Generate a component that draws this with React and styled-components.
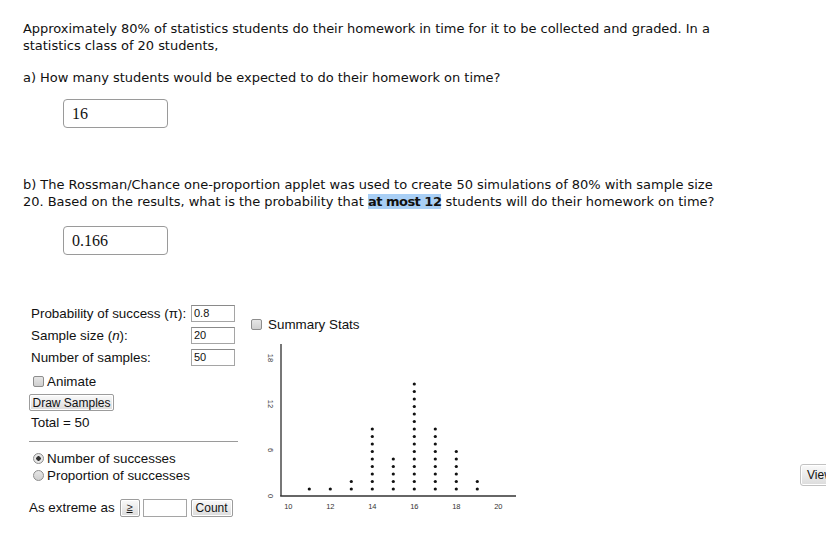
import React from 'react'
import styled, { createGlobalStyle } from 'styled-components'

const GlobalStyle = createGlobalStyle`
  html, body {
    margin: 0;
    padding: 0;
    background: #fff;
  }
  body {
    overflow: hidden;
  }
`

const Page = styled.div`
  width: 826px;
  height: 547px;
  overflow: hidden;
  padding-top: 20px;
  box-sizing: border-box;
`

const Question = styled.div`
  padding-left: 23px;
  font-family: 'DejaVu Sans', Verdana, sans-serif;
  font-size: 13px;
  letter-spacing: -0.03px;
  line-height: 17px;
  color: #111;
`

const Para = styled.p`
  margin: 0;
  margin-top: ${({ gap }) => gap || 0}px;
`

const Mark = styled.b`
  background: #a9cff5;
  letter-spacing: -0.5px;
`

const AnswerBox = styled.div`
  margin: ${({ top }) => top}px 0 0 40px;
  width: 105px;
  height: 29px;
  box-sizing: border-box;
  border: 1px solid #9a9a9a;
  border-radius: 4px;
  padding: 0 8px;
  display: flex;
  align-items: center;
  font-family: 'Liberation Serif', 'Times New Roman', serif;
  font-size: 16px;
  color: #111;
`

const Applet = styled.div`
  display: flex;
  align-items: flex-start;
  margin-top: 47px;
  padding-left: 29px;
  font-family: 'Liberation Sans', Arial, sans-serif;
  font-size: 13.4px;
  color: #111;
`

const LeftColumn = styled.div`
  width: 210px;
  flex-shrink: 0;
  display: flex;
  flex-direction: column;
  white-space: nowrap;
`

const ParamGrid = styled.div`
  display: grid;
  grid-template-columns: 160px 44px;
  grid-auto-rows: 22px;
  align-items: center;
  padding-left: 2px;
`

const SmallInput = styled.div`
  width: 44px;
  height: 17px;
  box-sizing: border-box;
  border: 1px solid #a5a5a5;
  border-top-color: #8a8a8a;
  font-size: 11px;
  line-height: 15px;
  padding-left: 2px;
  background: #fff;
`

const CheckRow = styled.label`
  display: flex;
  align-items: center;
  height: ${({ h }) => h || 18}px;
  padding-left: 4px;
  gap: 3px;
  margin-top: ${({ top }) => top || 0}px;
`

const Box = styled.span`
  width: 9px;
  height: 9px;
  border: 1px solid #8d8d8d;
  border-radius: 2px;
  background: linear-gradient(#e6e6e6, #cfcfcf);
`

const Radio = styled.span`
  width: 9px;
  height: 9px;
  border: 1px solid #8d8d8d;
  border-radius: 50%;
  background: ${({ on }) =>
    on ? 'radial-gradient(circle, #333 0 2px, #e6e6e6 2.5px)' : 'linear-gradient(#e6e6e6, #cfcfcf)'};
`

const GrayButton = styled.button`
  font-family: 'Liberation Sans', Arial, sans-serif;
  font-size: ${({ fs }) => fs || 12}px;
  color: #111;
  height: ${({ h }) => h || 17}px;
  padding: 0 5px;
  border: 1px solid #9c9c9c;
  border-radius: 2px;
  background: linear-gradient(#fafafa, #dcdcdc);
  box-shadow: inset 0 0 0 1px #fff;
  line-height: 1;
  cursor: default;
`

const DrawButton = styled(GrayButton)`
  align-self: flex-start;
  margin-top: 3px;
  width: 85px;
  padding: 0;
`

const TotalLine = styled.div`
  height: 22px;
  display: flex;
  align-items: center;
  padding-left: 2px;
`

const Rule = styled.hr`
  margin: 8px 0 8px 0;
  border: 0;
  border-top: 1px solid #9a9a9a;
  width: 209px;
`

const ExtremeRow = styled.div`
  display: flex;
  align-items: center;
  margin-top: 14px;
  height: 19px;
`

const ExtremeLabel = styled.span`
  margin-right: 5px;
`

const CountInput = styled.div`
  width: 44px;
  height: 18px;
  box-sizing: border-box;
  border: 1px solid #a5a5a5;
  margin: 0 4px 0 3px;
`

const GeButton = styled(GrayButton)`
  width: 20px;
  height: 18px;
  padding: 0;
  font-size: 11px;
  text-decoration: underline;
`

const CountButton = styled(GrayButton)`
  width: 42px;
  height: 18px;
  padding: 0;
`

const RightColumn = styled.div`
  margin-left: 12px;
  display: flex;
  flex-direction: column;
  padding-top: 12px;
`

const StatsRow = styled.label`
  display: flex;
  align-items: center;
  gap: 6px;
  height: 20px;
`

const Chart = styled.svg`
  display: block;
  margin: 1px 0 0 5px;
  overflow: visible;
`

const ViewButton = styled(GrayButton)`
  margin-top: 162px;
  margin-left: auto;
  margin-right: -14px;
  flex-shrink: 0;
  width: 40px;
  height: 22px;
  padding: 0 0 0 6px;
  text-align: left;
  border-radius: 3px;
  border-color: #c2c2c2;
`

const counts = { 11: 1, 12: 1, 13: 2, 14: 9, 15: 5, 16: 15, 17: 9, 18: 6, 19: 2 }

const xOf = (v) => 32.3 + 21 * (v - 10)

const DotPlot = () => {
  const dots = []
  Object.entries(counts).forEach(([v, n]) => {
    for (let i = 0; i < n; i++) {
      dots.push(<circle key={`${v}-${i}`} cx={xOf(+v)} cy={154 - 7.5 * i} r={1.6} fill='#111' />)
    }
  })
  const yTicks = [
    [0, 161],
    [6, 115],
    [12, 69],
    [18, 23],
  ]
  return (
    <Chart width='265' height='180' viewBox='0 0 265 180'>
      <line x1='25' y1='9' x2='25' y2='161' stroke='#555' strokeWidth='1.6' />
      <line x1='24.2' y1='161' x2='260' y2='161' stroke='#333' strokeWidth='1.6' />
      {dots}
      {[10, 12, 14, 16, 18, 20].map((t) => (
        <text
          key={t}
          x={xOf(t)}
          y='174'
          fontSize='7.5'
          textAnchor='middle'
          fill='#333'
          fontFamily='Liberation Sans, Arial, sans-serif'
        >
          {t}
        </text>
      ))}
      {yTicks.map(([t, y]) => (
        <text
          key={t}
          x='0'
          y='0'
          fontSize='7.5'
          textAnchor='middle'
          fill='#333'
          fontFamily='Liberation Sans, Arial, sans-serif'
          transform={`translate(11.5 ${y}) rotate(90)`}
        >
          {t}
        </text>
      ))}
    </Chart>
  )
}

const App = () => (
  <Page>
    <GlobalStyle />
    <Question>
      <Para>
        Approximately 80% of statistics students do their homework in time for it to be collected and graded. In a
        <br />
        statistics class of 20 students,
      </Para>
      <Para gap={15}>a) How many students would be expected to do their homework on time?</Para>
    </Question>
    <Question>
      <AnswerBox top={13}>16</AnswerBox>
      <Para gap={48}>
        b) The Rossman/Chance one-proportion applet was used to create 50 simulations of 80% with sample size
        <br />
        20. Based on the results, what is the probability that <Mark>at most 12</Mark> students will do their homework
        on time?
      </Para>
      <AnswerBox top={16}>0.166</AnswerBox>
    </Question>
    <Applet>
      <LeftColumn>
        <ParamGrid>
          <span>Probability of success (π):</span>
          <SmallInput>0.8</SmallInput>
          <span>
            Sample size (<i>n</i>):
          </span>
          <SmallInput>20</SmallInput>
          <span>Number of samples:</span>
          <SmallInput>50</SmallInput>
        </ParamGrid>
        <CheckRow top={3} h={20}>
          <Box />
          Animate
        </CheckRow>
        <DrawButton>Draw Samples</DrawButton>
        <TotalLine>Total = 50</TotalLine>
        <Rule />
        <CheckRow h={17}>
          <Radio on />
          Number of successes
        </CheckRow>
        <CheckRow h={17}>
          <Radio />
          Proportion of successes
        </CheckRow>
        <ExtremeRow>
          <ExtremeLabel>As extreme as</ExtremeLabel>
          <GeButton>≥</GeButton>
          <CountInput />
          <CountButton>Count</CountButton>
        </ExtremeRow>
      </LeftColumn>
      <RightColumn>
        <StatsRow>
          <Box />
          Summary Stats
        </StatsRow>
        <DotPlot />
      </RightColumn>
      <ViewButton>View</ViewButton>
    </Applet>
  </Page>
)

export default App
